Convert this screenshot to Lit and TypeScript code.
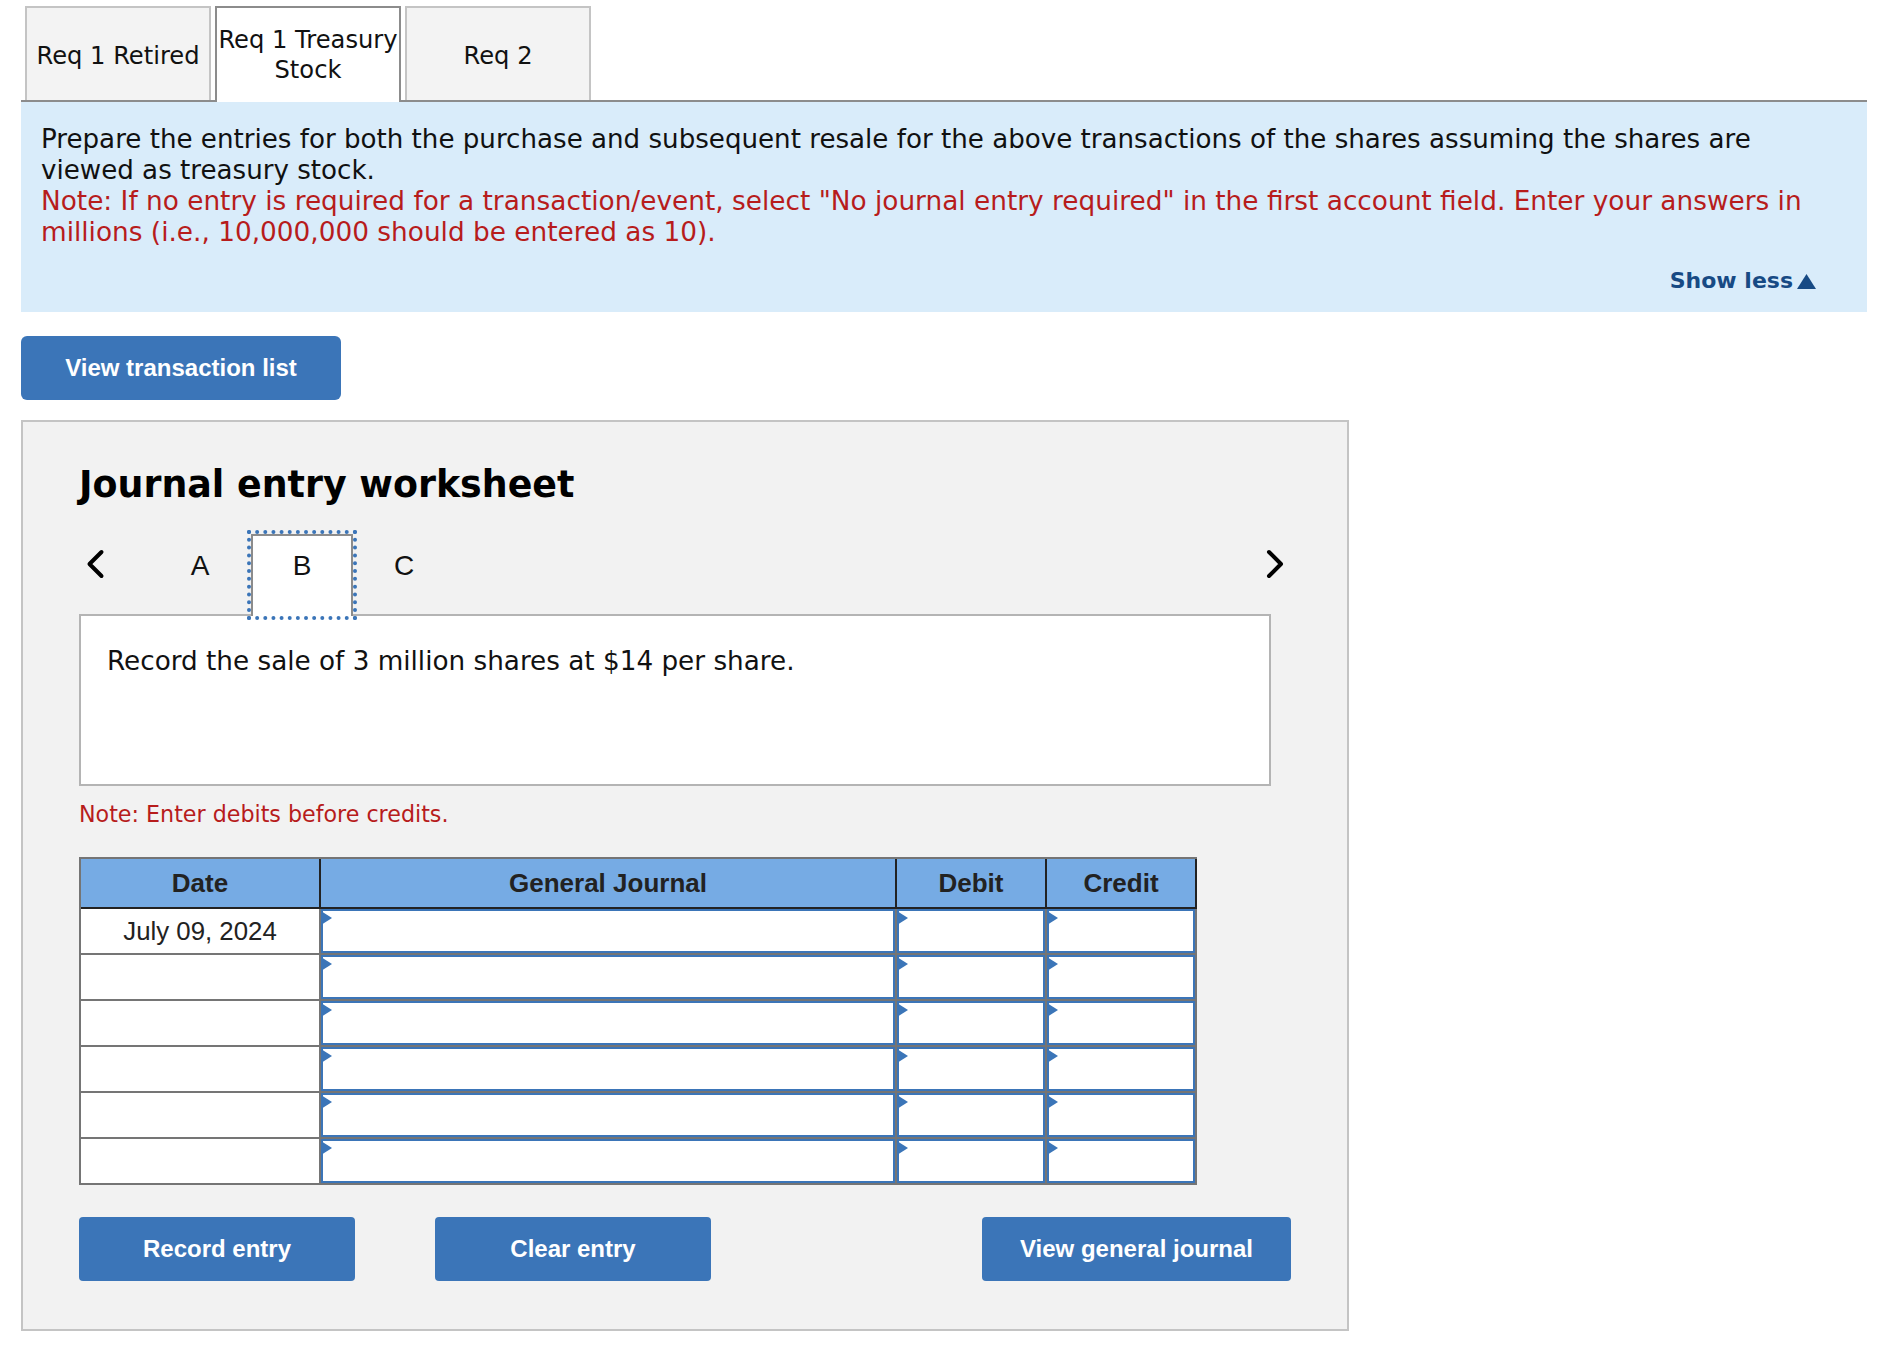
import { LitElement, html, css } from "lit";
import { customElement } from "lit/decorators.js";

const ROWS = ["July 09, 2024", "", "", "", "", ""];

@customElement("app-root")
export class AppRoot extends LitElement {
  static styles = css`
    :host {
      display: block;
      width: 1893px;
      height: 1361px;
      box-sizing: border-box;
      padding: 6px 26px 0 21px;
      background: #fff;
      font-family: "DejaVu Sans", sans-serif;
      color: #111;
    }
    .tabs {
      display: flex;
      gap: 4px;
      padding-left: 4px;
      height: 94px;
      border-bottom: 2px solid #8c8c8c;
      font-size: 24.2px;
      line-height: 30px;
    }
    .tab {
      width: 186px;
      box-sizing: border-box;
      display: flex;
      align-items: center;
      justify-content: center;
      padding-top: 4px;
      text-align: center;
      background: #f3f3f3;
      border: 2px solid #c4c4c4;
      border-bottom: none;
      white-space: nowrap;
    }
    .tab.active {
      background: #fff;
      border-color: #8c8c8c;
      height: 96px;
      padding-top: 0;
      position: relative;
      z-index: 1;
    }
    .intro {
      background: #d9ecfa;
      height: 210px;
      box-sizing: border-box;
      padding: 22px 40px 0 20px;
      font-size: 26.13px;
      line-height: 31px;
    }
    .red { color: #b71c1c; font-size: 26.35px; }
    .more {
      display: flex;
      justify-content: flex-end;
      align-items: center;
      gap: 4px;
      margin: 18px 11px 0 0;
      color: #174a84;
      font-size: 22px;
      font-weight: bold;
      line-height: 30px;
    }
    .btn {
      display: flex;
      align-items: center;
      justify-content: center;
      height: 64px;
      box-sizing: border-box;
      background: #3b75b8;
      color: #fff;
      border-radius: 4px;
      font: bold 24px "Liberation Sans", Arial, sans-serif;
    }
    .list { width: 320px; margin-top: 24px; border-radius: 6px; }
    .card {
      width: 1328px;
      height: 911px;
      box-sizing: border-box;
      margin-top: 20px;
      background: #f2f2f2;
      border: 2px solid #c4c4c4;
      padding: 39px 56px 0;
    }
    h2 {
      margin: 0;
      font-size: 36.4px;
      line-height: 48px;
      font-weight: bold;
      color: #000;
    }
    .steps {
      display: flex;
      align-items: flex-start;
      height: 80px;
      margin-top: 25px;
      position: relative;
      z-index: 1;
      font: 28px "Liberation Sans", Arial, sans-serif;
    }
    .chev { width: 16px; height: 28px; margin: 16px 0 0 8px; flex: none; overflow: visible; }
    .chev.next { margin-left: auto; margin-right: 8px; }
    .step {
      width: 102px;
      height: 82px;
      box-sizing: border-box;
      display: flex;
      justify-content: center;
      padding-top: 16px;
    }
    .step.first { margin-left: 46px; }
    .step.active {
      background: #fff;
      border: 2px solid #8c8c8c;
      border-bottom: none;
      padding-top: 14px;
      outline: 4px dotted #3b75b8;
    }
    .desc {
      width: 1192px;
      height: 172px;
      box-sizing: border-box;
      background: #fff;
      border: 2px solid #b4b4b4;
      padding: 30px 26px;
      font-size: 26.25px;
      line-height: 31px;
    }
    .note {
      margin-top: 14px;
      font-size: 22.2px;
      line-height: 28px;
      color: #b71c1c;
    }
    table {
      margin-top: 29px;
      border-collapse: separate;
      border-spacing: 0;
      table-layout: fixed;
      width: 1118px;
      background: #fff;
      border-top: 2px solid #757575;
      border-left: 2px solid #757575;
      font: 25.8px "Liberation Sans", Arial, sans-serif;
      color: #222;
    }
    th {
      height: 48px;
      padding: 0;
      background: #76abe4;
      font-size: 26px;
      font-weight: bold;
      border-bottom: 2px solid #222;
      border-right: 2px solid #222;
    }
    td {
      height: 44px;
      padding: 0;
      text-align: center;
      border-bottom: 2px solid #757575;
      border-right: 2px solid #757575;
      vertical-align: middle;
    }
    .entry {
      position: relative;
      display: block;
      height: 44px;
      box-sizing: border-box;
      background: #fff;
      border: 2px solid #3b75b8;
    }
    .entry::before {
      content: "";
      position: absolute;
      left: -2px;
      top: 0;
      border-left: 11px solid #3b75b8;
      border-top: 7px solid transparent;
      border-bottom: 7px solid transparent;
    }
    .actions {
      display: flex;
      margin-top: 32px;
      width: 1212px;
    }
    .actions .btn { width: 276px; }
    .actions .btn + .btn { margin-left: 80px; }
    .actions .btn:last-child { width: 309px; margin-left: auto; }
  `;

  render() {
    return html`
      <div class="tabs">
        <div class="tab">Req 1 Retired</div>
        <div class="tab active">Req 1 Treasury<br />Stock</div>
        <div class="tab">Req 2</div>
      </div>
      <div class="intro">
        <div>Prepare the entries for both the purchase and subsequent resale for the above transactions of the shares assuming the shares are viewed as treasury stock.</div>
        <div class="red">Note: If no entry is required for a transaction/event, select "No journal entry required" in the first account field. Enter your answers in millions (i.e., 10,000,000 should be entered as 10).</div>
        <div class="more">Show less
          <svg width="19" height="15" viewBox="0 0 19 15"><path d="M9.5 0L19 15H0z" fill="#174a84"/></svg>
        </div>
      </div>
      <div class="btn list">View transaction list</div>
      <div class="card">
        <h2>Journal entry worksheet</h2>
        <div class="steps">
          <svg class="chev" viewBox="0 0 16 28"><path d="M14.5 2L2.5 14L14.5 26" fill="none" stroke="#000" stroke-width="4" stroke-linecap="round" stroke-linejoin="round"/></svg>
          <div class="step first">A</div>
          <div class="step active">B</div>
          <div class="step">C</div>
          <svg class="chev next" viewBox="0 0 16 28"><path d="M2 2L14 14L2 26" fill="none" stroke="#000" stroke-width="4" stroke-linecap="round" stroke-linejoin="round"/></svg>
        </div>
        <div class="desc">Record the sale of 3 million shares at $14 per share.</div>
        <div class="note">Note: Enter debits before credits.</div>
        <table>
          <colgroup><col style="width:240px" /><col style="width:576px" /><col style="width:150px" /><col style="width:150px" /></colgroup>
          <thead><tr><th>Date</th><th>General Journal</th><th>Debit</th><th>Credit</th></tr></thead>
          <tbody>
            ${ROWS.map(
              (date) => html`<tr>
                <td>${date}</td>
                <td><span class="entry"></span></td>
                <td><span class="entry"></span></td>
                <td><span class="entry"></span></td>
              </tr>`
            )}
          </tbody>
        </table>
        <div class="actions">
          <div class="btn">Record entry</div>
          <div class="btn">Clear entry</div>
          <div class="btn">View general journal</div>
        </div>
      </div>
    `;
  }
}
